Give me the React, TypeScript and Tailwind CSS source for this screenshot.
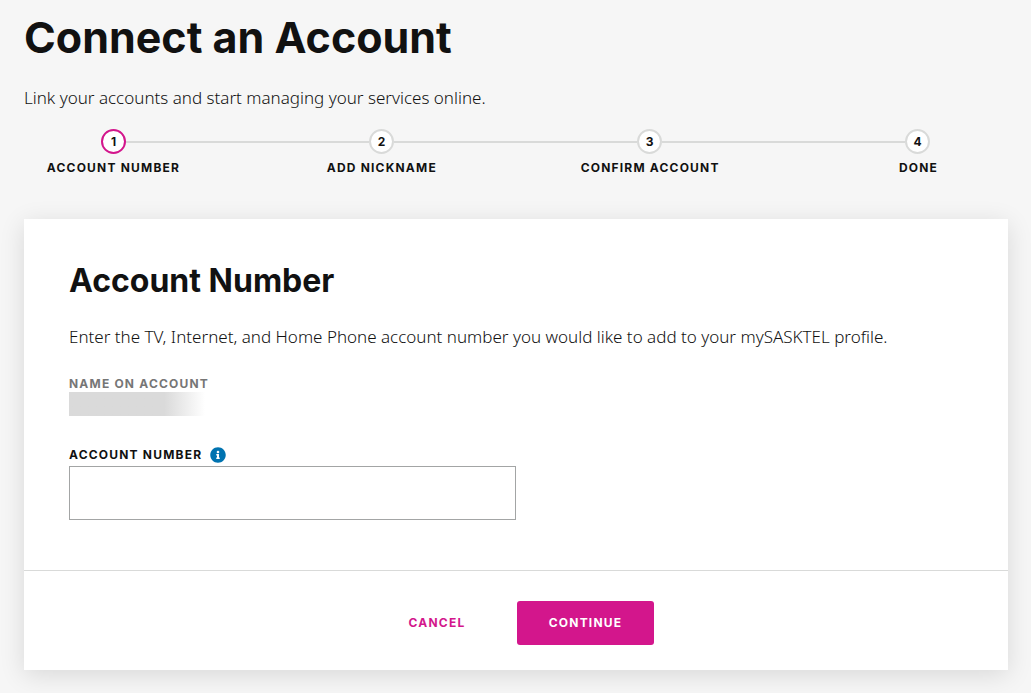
import React, { Fragment, useState } from "react";
import { FaInfoCircle } from "react-icons/fa";

const steps = ["Account Number", "Add Nickname", "Confirm Account", "Done"];

function Stepper({ current }: { current: number }) {
  return (
    <div className="mt-[19px]">
      {/* Circles and the lines between them */}
      <div className="flex items-center pr-[78px] pl-[77px]">
        {steps.map((step, index) => (
          <Fragment key={step}>
            {index > 0 && <div className="h-0.5 flex-1 bg-[#d9dad9]"></div>}
            <div
              className={`flex size-[25px] items-center justify-center rounded-full border-2 bg-white text-xs font-bold ${
                index === current ? "border-[#d3168c]" : "border-[#d9dad9]"
              }`}
            >
              {index + 1}
            </div>
          </Fragment>
        ))}
      </div>
      <ol className="mt-1 flex justify-between">
        {steps.map((step, index) => (
          <li
            key={step}
            aria-current={index === current ? "step" : undefined}
            className="w-[179px] text-center text-xs leading-5 font-bold tracking-widest uppercase"
          >
            {step}
          </li>
        ))}
      </ol>
    </div>
  );
}

export default function App() {
  const [accountNumber, setAccountNumber] = useState("");

  return (
    <main className="min-h-screen bg-[#f6f6f6] pt-3 pr-[23px] pb-[23px] pl-6 font-['Inter',sans-serif] text-[#111111]">
      <h1 className="text-[43px] leading-[50px] font-bold">
        Connect an Account
      </h1>
      <p className="mt-6 font-['Noto_Sans','Open_Sans',sans-serif] text-[17px] leading-6 font-light">
        Link your accounts and start managing your services online.
      </p>
      <Stepper current={0} />

      <form
        className="mt-[41px] bg-white shadow-[0_5px_24px_rgba(0,0,0,0.12)]"
        onSubmit={(e) => e.preventDefault()}
      >
        <div className="px-[45px] pt-[42px] pb-[50px]">
          <h2 className="text-[32px] leading-10 font-bold">Account Number</h2>
          <p className="mt-6 font-['Noto_Sans','Open_Sans',sans-serif] text-[17px] leading-6 font-light">
            Enter the TV, Internet, and Home Phone account number you would like
            to add to your mySASKTEL profile.
          </p>

          {/* Name on account, kept hidden */}
          <p className="mt-[27px] text-xs leading-4 font-bold tracking-widest text-[#767676] uppercase">
            Name on Account
          </p>
          <div className="h-6 w-[136px] bg-linear-to-r from-[#dadada] via-[#dadada] via-70% to-white"></div>

          <div className="mt-[29px] flex items-center gap-2 leading-5">
            <label
              htmlFor="account-number"
              className="text-xs leading-5 font-bold tracking-widest uppercase"
            >
              Account Number
            </label>
            <button
              type="button"
              aria-label="About account numbers"
              className="text-base text-[#0073b0]"
            >
              <FaInfoCircle />
            </button>
          </div>
          <input
            id="account-number"
            type="text"
            className="mt-px block h-[54px] w-1/2 border border-[#a3a5a5] bg-white px-4 text-base"
            value={accountNumber}
            onChange={(e) => setAccountNumber(e.target.value)}
          />
        </div>

        {/* Actions */}
        <div className="flex items-center justify-center gap-[21px] border-t border-[#d9dad9] pt-[30px] pb-[25px]">
          <button
            type="button"
            className="h-11 w-[118px] text-xs font-bold tracking-widest text-[#d3168c] uppercase"
          >
            Cancel
          </button>
          <button
            type="submit"
            className="h-11 w-[137px] rounded-[3px] bg-[#d3168c] text-xs font-bold tracking-widest text-white uppercase"
          >
            Continue
          </button>
        </div>
      </form>
    </main>
  );
}
